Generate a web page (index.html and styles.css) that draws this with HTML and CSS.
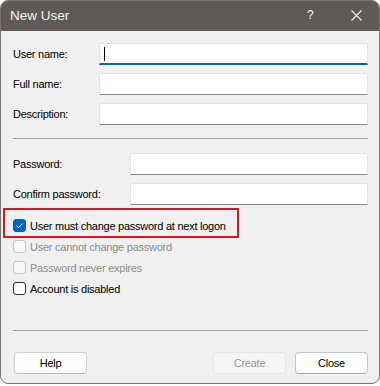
FILE: index.html
```html
<!DOCTYPE html>
<html>
<head>
<meta charset="utf-8">
<link rel="stylesheet" href="styles.css">
</head>
<body>
<div class="window">
  <div class="titlebar">
    <span class="title">New User</span>
    <span class="help-btn">?</span>
    <span class="close-btn"><svg width="11" height="11" viewBox="0 0 11 11"><path d="M0.5 0.5 L10.5 10.5 M10.5 0.5 L0.5 10.5" stroke="#f2f2f2" stroke-width="1.1" fill="none"/></svg></span>
  </div>
  <div class="content">
    <div class="fields fields-a">
      <label class="lbl">User name:</label>
      <div class="input focused"><span class="caret"></span></div>
      <label class="lbl">Full name:</label>
      <div class="input"></div>
      <label class="lbl">Description:</label>
      <div class="input"></div>
    </div>
    <div class="sep sep1"></div>
    <div class="fields fields-b">
      <label class="lbl">Password:</label>
      <div class="input"></div>
      <label class="lbl">Confirm password:</label>
      <div class="input"></div>
    </div>
    <div class="checks">
      <div class="check highlight"><span class="box checked"><svg width="13" height="13" viewBox="0 0 13 13"><path d="M3.6 6.8 L5.6 8.7 L9.5 4.6" stroke="#fff" stroke-width="1" fill="none"/></svg></span><span class="ctext">User must change password at next logon</span></div>
      <div class="check disabled"><span class="box"></span><span class="ctext">User cannot change password</span></div>
      <div class="check disabled"><span class="box"></span><span class="ctext">Password never expires</span></div>
      <div class="check"><span class="box"></span><span class="ctext">Account is disabled</span></div>
    </div>
    <div class="sep sep2"></div>
    <div class="buttons">
      <button class="btn">Help</button>
      <span class="spacer"></span>
      <button class="btn disabled-btn">Create</button>
      <button class="btn default-btn">Close</button>
    </div>
  </div>
</div>
</body>
</html>
```
FILE: styles.css
```css
html, body {
  margin: 0;
  padding: 0;
  background: #ffffff;
}
body {
  font-family: "Liberation Sans", Arial, sans-serif;
  font-size: 11px;
  letter-spacing: -0.25px;
  color: #000;
}
.window {
  width: 380px;
  height: 384px;
  box-sizing: border-box;
  border: 1px solid #777370;
  border-radius: 8px;
  background: #f0f0f0;
  overflow: hidden;
  display: flex;
  flex-direction: column;
}
.titlebar {
  height: 30px;
  background: #5f5a56;
  color: #f4f4f4;
  display: flex;
  align-items: center;
  padding-left: 9px;
  flex: none;
}
.title {
  font-size: 13.5px;
  letter-spacing: 0;
  flex: 1;
  margin-top: -1px;
}
.help-btn {
  font-size: 12px;
  letter-spacing: 0;
  width: 12px;
  margin-right: 32px;
  margin-top: -2px;
}
.close-btn {
  width: 11px;
  height: 11px;
  margin-right: 17px;
  margin-top: -1px;
  display: flex;
}
.content {
  padding: 12px 11px 0 11px;
  display: flex;
  flex-direction: column;
}
.fields {
  display: grid;
  row-gap: 8px;
  align-items: center;
}
.fields-a { grid-template-columns: 87px 1fr; }
.fields-b { grid-template-columns: 118px 1fr; }
.lbl { padding-left: 1px; }
.input {
  height: 22px;
  box-sizing: border-box;
  background: #fff;
  border: 1px solid #e3e3e3;
  border-bottom: 1px solid #8a8a8a;
  border-radius: 2px 2px 0 0;
  position: relative;
}
.input.focused {
  border-bottom: 2px solid #0067c0;
}
.caret {
  position: absolute;
  left: 4px;
  top: 3px;
  width: 1px;
  height: 14px;
  background: #000;
}
.sep {
  height: 1px;
  background: #a0a0a0;
  margin-left: 1px;
}
.sep1 { margin-top: 13px; margin-bottom: 14px; }
.checks {
  margin-top: 10px;
  display: flex;
  flex-direction: column;
}
.check {
  height: 21px;
  display: flex;
  align-items: center;
  padding-left: 1px;
}
.highlight { position: relative; }
.highlight::before {
  content: "";
  position: absolute;
  left: -9px;
  top: -7px;
  width: 236px;
  height: 30px;
  box-sizing: border-box;
  border: 2px solid #e2141a;
}
.box {
  width: 13px;
  height: 13px;
  box-sizing: border-box;
  border: 1px solid #333;
  border-radius: 3px;
  background: #fff;
  margin-right: 4px;
  display: flex;
}
.box.checked {
  background: #0067c0;
  border-color: #0067c0;
}
.box.checked svg { margin: -1px; }
.disabled .box { border-color: #c6c6c6; background: #f7f7f7; }
.disabled .ctext { color: #8d8d8d; }
.sep2 { margin-top: 31px; }
.buttons {
  margin-top: 21px;
  display: flex;
  gap: 9px;
  padding-left: 2px;
}
.spacer { flex: 1; }
.btn {
  width: 73px;
  height: 22px;
  font-family: "Liberation Sans", Arial, sans-serif;
  font-size: 11px;
  letter-spacing: -0.25px;
  color: #000;
  background: #fdfdfd;
  border: 1px solid #d0d0d0;
  border-bottom-color: #bdbdbd;
  border-radius: 4px;
  padding: 0;
}
.disabled-btn {
  background: #f5f5f5;
  border-color: #e6e6e6;
  color: #9a9a9a;
}
.default-btn {
  border-color: #c8c8c8;
  border-bottom-color: #a8a8a8;
}
```
